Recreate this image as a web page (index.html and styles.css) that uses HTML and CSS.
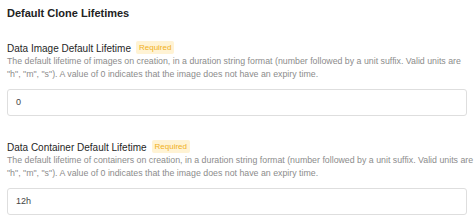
FILE: index.html
```html
<!DOCTYPE html>
<html>
<head>
<meta charset="utf-8">
<link rel="stylesheet" href="styles.css">
</head>
<body>
<div class="section">
  <h2 class="title">Default Clone Lifetimes</h2>
  <div class="field">
    <div class="label-row">
      <span class="label">Data Image Default Lifetime</span>
      <span class="badge">Required</span>
    </div>
    <p class="desc">The default lifetime of images on creation, in a duration string format (number followed by a unit suffix. Valid units are<br>"h", "m", "s"). A value of 0 indicates that the image does not have an expiry time.</p>
    <div class="input">0</div>
  </div>
  <div class="field">
    <div class="label-row">
      <span class="label">Data Container Default Lifetime</span>
      <span class="badge">Required</span>
    </div>
    <p class="desc">The default lifetime of containers on creation, in a duration string format (number followed by a unit suffix. Valid units are<br>"h", "m", "s"). A value of 0 indicates that the image does not have an expiry time.</p>
    <div class="input">12h</div>
  </div>
</div>
</body>
</html>
```
FILE: styles.css
```css
html, body {
  margin: 0;
  padding: 0;
  background: #ffffff;
}
body {
  font-family: "Liberation Sans", Arial, sans-serif;
  color: #222;
}
.section {
  padding: 6px 7px 0 7px;
}
.title {
  margin: 0;
  font-size: 11px;
  line-height: 14px;
  font-weight: bold;
  color: #222;
}
.field {
  margin-top: 21px;
}
.field + .field {
  margin-top: 24px;
}
.label-row {
  display: flex;
  align-items: center;
  gap: 5px;
  height: 13px;
}
.label {
  font-size: 10px;
  line-height: 13px;
  color: #1f1f1f;
  padding-top: 2px;
}
.badge {
  font-size: 8px;
  line-height: 13px;
  padding: 0 3px;
  background: #fff3d4;
  color: #f0b021;
  border-radius: 2px;
}
.desc {
  margin: 1px -7px 0 0;
  font-size: 8.8px;
  line-height: 13px;
  color: #8c8c8c;
}
.input {
  margin-top: 8px;
  height: 25px;
  border: 1px solid #dedede;
  border-radius: 3px;
  padding: 0 8px;
  font-size: 9px;
  line-height: 25px;
  color: #444;
}
```
